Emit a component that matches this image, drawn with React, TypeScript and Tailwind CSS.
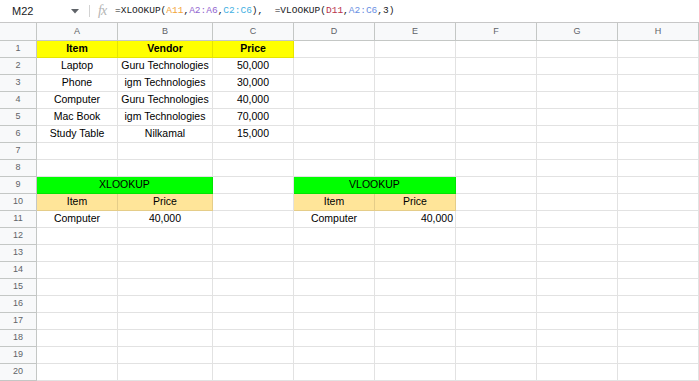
import React from 'react';

type Fill = 'yellow' | 'green' | 'orange';
type Cell = { text?: string; span?: number; fill?: Fill; bold?: boolean; right?: boolean };

const COLUMNS = ['A', 'B', 'C', 'D', 'E', 'F', 'G', 'H'];

const FILL_CLASS: Record<Fill, string> = {
  yellow: 'bg-[#ffff00]',
  green: 'bg-[#00ff00]',
  orange: 'bg-[#ffe599]',
};

const DATA: Record<number, Cell[]> = {
  1: [
    { text: 'Item', fill: 'yellow', bold: true },
    { text: 'Vendor', fill: 'yellow', bold: true },
    { text: 'Price', fill: 'yellow', bold: true },
  ],
  2: [{ text: 'Laptop' }, { text: 'Guru Technologies' }, { text: '50,000' }],
  3: [{ text: 'Phone' }, { text: 'igm Technologies' }, { text: '30,000' }],
  4: [{ text: 'Computer' }, { text: 'Guru Technologies' }, { text: '40,000' }],
  5: [{ text: 'Mac Book' }, { text: 'igm Technologies' }, { text: '70,000' }],
  6: [{ text: 'Study Table' }, { text: 'Nilkamal' }, { text: '15,000' }],
  9: [
    { text: 'XLOOKUP', fill: 'green', span: 2 },
    {},
    { text: 'VLOOKUP', fill: 'green', span: 2 },
  ],
  10: [
    { text: 'Item', fill: 'orange' },
    { text: 'Price', fill: 'orange' },
    {},
    { text: 'Item', fill: 'orange' },
    { text: 'Price', fill: 'orange' },
  ],
  11: [
    { text: 'Computer' },
    { text: '40,000' },
    {},
    { text: 'Computer' },
    { text: '40,000', right: true },
  ],
};

function rowCells(r: number): Cell[] {
  const cells = [...(DATA[r] ?? [])];
  let used = cells.reduce((n, c) => n + (c.span ?? 1), 0);
  while (used < COLUMNS.length) {
    cells.push({});
    used++;
  }
  return cells;
}

function FormulaBar() {
  return (
    <div className="h-[23px] flex items-center border-b border-[#c7c7c7] bg-white text-[#202124]">
      <div className="w-[62px] pl-[12px] text-[11px]">M22</div>
      <svg width="8" height="5" viewBox="0 0 8 5" className="ml-[9px] mt-[1px]">
        <path d="M0 0 L8 0 L4 4.5 Z" fill="#5f6368" />
      </svg>
      <div className="ml-[10px] w-px h-[12px] bg-[#d3d3d3]" />
      <span className="ml-[8px] w-[17px] text-[14px] leading-none italic text-[#b5b5b5] font-['Liberation_Serif',serif] tracking-[-1px]">
        fx
      </span>
      <div className="font-['Liberation_Mono',monospace] text-[9.5px] whitespace-pre leading-none">
        <span>=XLOOKUP(</span>
        <span className="text-[#f2a43a]">A11</span>
        <span>,</span>
        <span className="text-[#9366cf]">A2:A6</span>
        <span>,</span>
        <span className="text-[#3fb0e2]">C2:C6</span>
        <span>),  =VLOOKUP(</span>
        <span className="text-[#b8344c]">D11</span>
        <span>,</span>
        <span className="text-[#6a8fe2]">A2:C6</span>
        <span>,3)</span>
      </div>
    </div>
  );
}

export default function App() {
  const rows = Array.from({ length: 20 }, (_, i) => i + 1);

  return (
    <div className="w-[699px] h-[381px] overflow-hidden bg-white font-['Liberation_Sans',Arial,sans-serif]">
      <FormulaBar />

      <div className="grid grid-cols-[37px_81px_95px_81px_81px_81px_81px_81px_81px] grid-rows-[18px] auto-rows-[17px] w-[699px]">
        {/* Column headers */}
        <div className="bg-[#f8f9fa] border-r border-b border-[#c4c7c5]" />
        {COLUMNS.map((c) => (
          <div
            key={c}
            className="bg-[#f8f9fa] border-r border-b border-[#c4c7c5] flex items-center justify-center text-[9px] text-[#5f6368]"
          >
            {c}
          </div>
        ))}

        {/* Rows */}
        {rows.map((r) => (
          <React.Fragment key={r}>
            <div className="bg-[#f8f9fa] border-r border-b border-[#c4c7c5] flex items-center justify-center text-[9px] text-[#5f6368]">
              {r}
            </div>
            {rowCells(r).map((cell, i) => (
              <div
                key={i}
                className={[
                  'border-r border-b flex items-center text-[10.5px] text-black whitespace-nowrap overflow-hidden',
                  cell.fill ? `${FILL_CLASS[cell.fill]} border-black/10` : 'border-[#e2e2e2]',
                  cell.span === 2 ? 'col-span-2' : '',
                  cell.right ? 'justify-end pr-[2px]' : 'justify-center',
                  cell.bold ? 'font-bold' : '',
                ].join(' ')}
              >
                {cell.text}
              </div>
            ))}
          </React.Fragment>
        ))}
      </div>
    </div>
  );
}
